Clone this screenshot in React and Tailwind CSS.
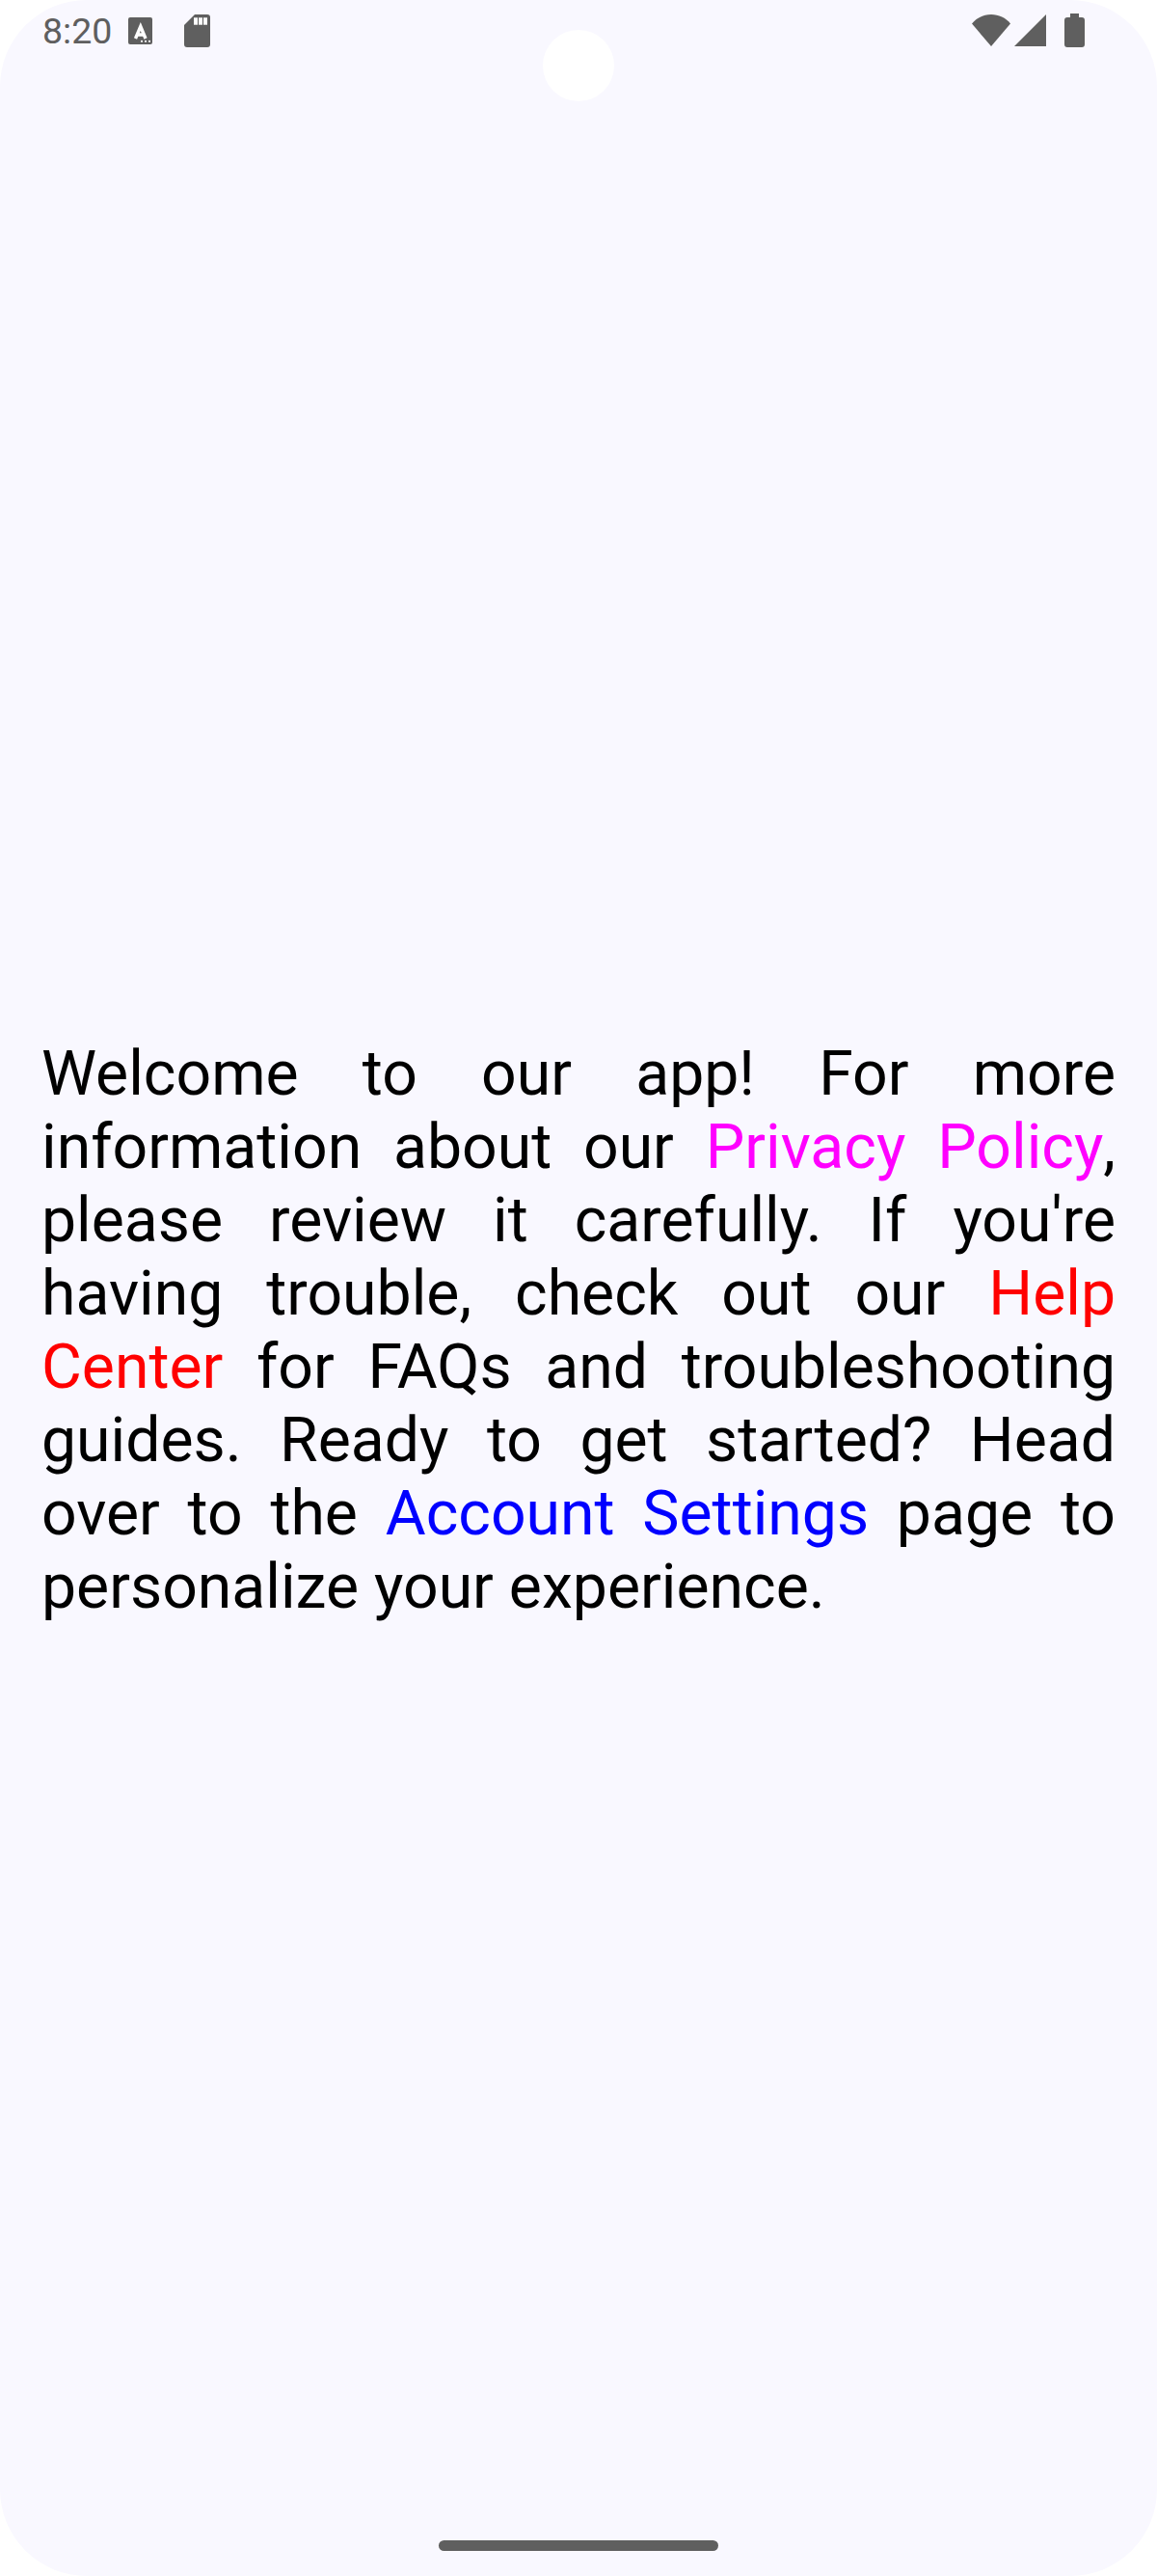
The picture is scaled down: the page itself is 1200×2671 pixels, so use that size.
export default function App() {
  return (
    <div className="w-[1200px] h-[2671px] bg-white overflow-hidden">
      <div className="relative w-full h-full rounded-[90px] bg-[#f9f8ff] flex flex-col font-['Roboto',sans-serif]">
        <div className="h-[86px] shrink-0 flex items-start pl-[44px] pr-[75px] text-[#5f5f5f]">
          <span className="text-[37.5px] leading-[42px] mt-[11px] w-[89px]">8:20</span>
          <svg className="mt-[18px] w-[25px] h-[28px]" viewBox="0 0 25 28">
            <rect x="0" y="0" width="25" height="28" rx="2" fill="#5f5f5f" />
            <path d="M7.5 22 L12.8 9.5 L18 22 M9.5 18 H16" fill="none" stroke="#fff" strokeWidth="3.4" />
            <circle cx="14" cy="24.8" r="1.1" fill="#fff" />
            <circle cx="18" cy="24.8" r="1.1" fill="#fff" />
            <circle cx="22" cy="24.8" r="1.1" fill="#fff" />
          </svg>
          <svg className="mt-[15px] ml-[33px] w-[27px] h-[34px]" viewBox="0 0 27 34">
            <path d="M11 0 H24 a3 3 0 0 1 3 3 V31 a3 3 0 0 1 -3 3 H3 a3 3 0 0 1 -3 -3 V11 Z" fill="#5f5f5f" />
            <rect x="10" y="3.3" width="4" height="7.4" fill="#fff" />
            <rect x="15" y="3.3" width="4" height="7.4" fill="#fff" />
            <rect x="20" y="3.3" width="4" height="7.4" fill="#fff" />
          </svg>
          <div className="flex-1" />
          <svg className="mt-[15px] w-[40px] h-[33px]" viewBox="0 0 40 33">
            <path d="M20 33 L0 9.5 C5 3.5 12 0 20 0 C28 0 35 3.5 40 9.5 Z" fill="#5f5f5f" />
          </svg>
          <svg className="mt-[15px] ml-[4px] w-[33px] h-[33px]" viewBox="0 0 33 33">
            <path d="M33 0 V33 H0 Z" fill="#5f5f5f" />
          </svg>
          <svg className="mt-[14px] ml-[19px] w-[21px] h-[35px]" viewBox="0 0 21 35">
            <path d="M6 0 H15 V4 H18 a3 3 0 0 1 3 3 V32 a3 3 0 0 1 -3 3 H3 a3 3 0 0 1 -3 -3 V7 a3 3 0 0 1 3 -3 H6 Z" fill="#5f5f5f" />
          </svg>
        </div>
        <div className="absolute left-[563px] top-[31px] w-[74px] h-[74px] rounded-full bg-white" />
        <div className="flex-1 flex items-center px-[43px]">
          <p className="text-[64.3px] leading-[76px] text-black text-justify w-full">
            Welcome to our app! For more information about our <span className="text-[#ff00ff]">Privacy Policy</span><span className="[font-kerning:none]">,</span> please review it carefully. If you're having trouble, check out our <span className="text-[#ff0000]">Help Center</span> for FAQs and troubleshooting guides. Ready to get started? Head over to the <span className="text-[#0000ff]">Account Settings</span> page to personalize your experience.
          </p>
        </div>
        <div className="absolute left-[455px] top-[2634px] w-[290px] h-[11px] rounded-full bg-[#5f5f5f]" />
      </div>
    </div>
  );
}
